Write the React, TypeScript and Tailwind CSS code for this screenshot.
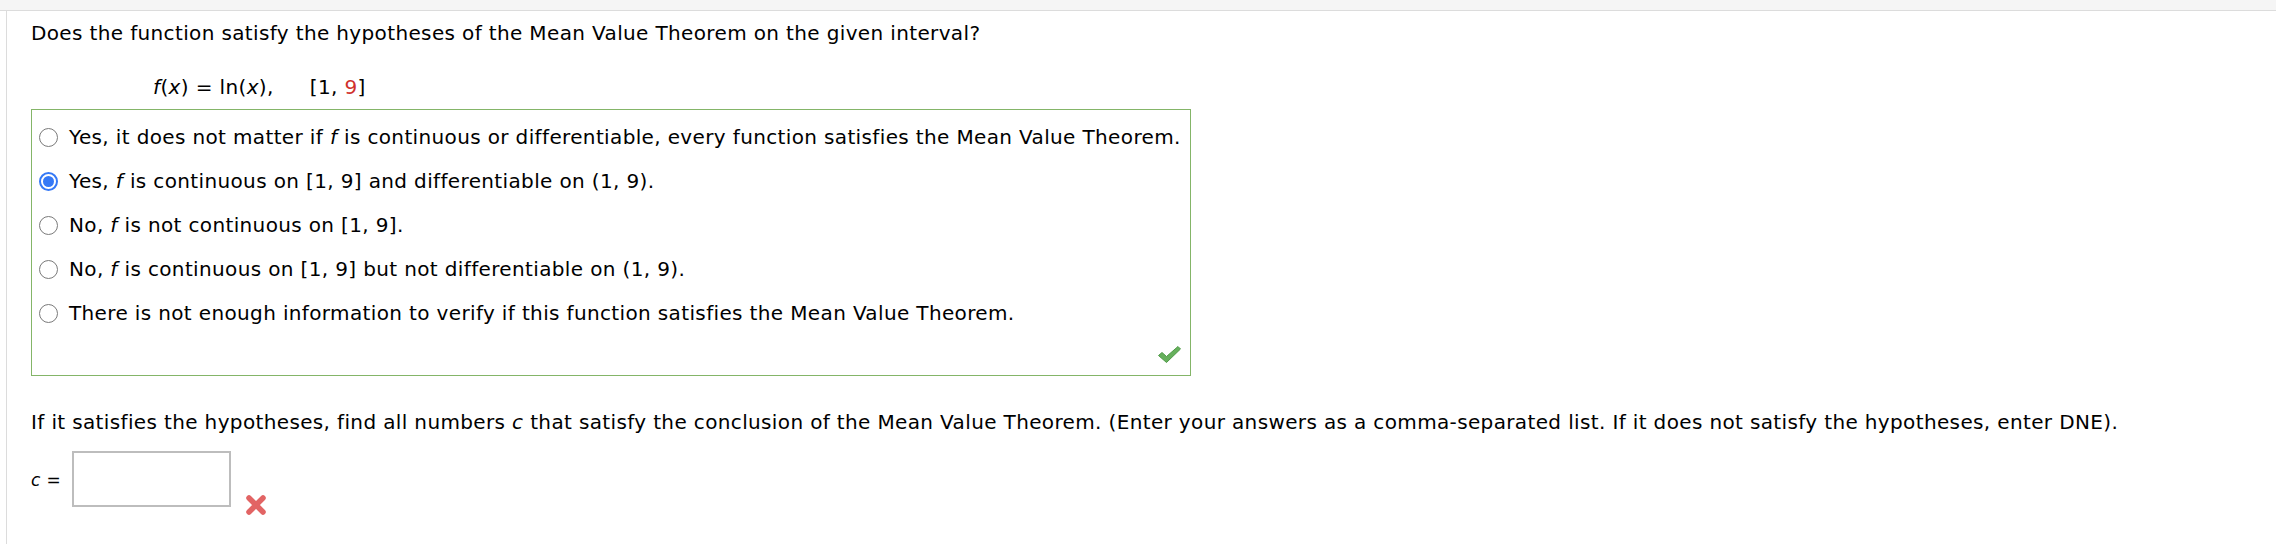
import React from 'react';

const options = [
  { id: 'a', before: 'Yes, it does not matter if ', after: ' is continuous or differentiable, every function satisfies the Mean Value Theorem.' },
  { id: 'b', before: 'Yes, ', after: ' is continuous on [1, 9] and differentiable on (1, 9).' },
  { id: 'c', before: 'No, ', after: ' is not continuous on [1, 9].' },
  { id: 'd', before: 'No, ', after: ' is continuous on [1, 9] but not differentiable on (1, 9).' },
  { id: 'e', before: 'There is not enough information to verify if this function satisfies the Mean Value Theorem.', after: '' },
];

const selected = 'b';

const Radio: React.FC<{ checked: boolean }> = ({ checked }) =>
  checked ? (
    <span className="flex h-[19px] w-[19px] shrink-0 items-center justify-center rounded-full border-[2px] border-[#3478f6] bg-white">
      <span className="h-[11px] w-[11px] rounded-full bg-[#3478f6]" />
    </span>
  ) : (
    <span className="h-[19px] w-[19px] shrink-0 rounded-full border border-[#7a7a7a] bg-white" />
  );

const Check = () => (
  <svg width="25" height="19" viewBox="0 0 25 19">
    <path d="M1.5 10.5 L5 7.5 L9.5 11.5 L21 1.5 L23.5 4 L9.5 17.5 Z" fill="#66b05c" stroke="#4f9a47" strokeWidth="1" strokeLinejoin="round" />
  </svg>
);

const Cross = () => (
  <svg width="22" height="22" viewBox="0 0 22 22">
    <path d="M4 4 L18 18 M18 4 L4 18" stroke="#e26464" strokeWidth="5.5" strokeLinecap="round" />
  </svg>
);

const App: React.FC = () => {
  return (
    <div className="h-[544px] w-full overflow-hidden bg-white text-black" style={{ fontFamily: '"DejaVu Sans", Verdana, sans-serif' }}>
      <div className="h-[11px] border-b border-[#dcdcdc] bg-[#f5f5f5]" />
      <div className="ml-[6px] h-[533px] border-l border-[#dcdcdc] pl-[24px] pt-[10px] tracking-[0.36px]">
        <p className="whitespace-nowrap text-[20px] leading-[24px]">
          Does the function satisfy the hypotheses of the Mean Value Theorem on the given interval?
        </p>
        <p className="mt-[30px] pl-[122px] text-[20px] leading-[24px]">
          <i>f</i>(<i>x</i>) = ln(<i>x</i>),
          <span className="ml-[36px]">
            [1, <span className="text-[#d0312d]">9</span>]
          </span>
        </p>
        <div className="mt-[10px] flex w-[1160px] flex-col border border-[#84b568] pl-[7px] pr-[4px] pt-[5px] pb-[11px]">
          {options.map((o) => (
            <label key={o.id} className="flex h-[44px] items-center gap-[11px] whitespace-nowrap text-[20px] leading-[24px]">
              <Radio checked={o.id === selected} />
              <span>
                {o.before}
                {o.after && <i>f</i>}
                {o.after}
              </span>
            </label>
          ))}
          <div className="mt-[10px] flex justify-end pr-[4px]">
            <Check />
          </div>
        </div>
        <p className="mt-[34px] whitespace-nowrap text-[20px] leading-[24px]">
          If it satisfies the hypotheses, find all numbers <i>c</i> that satisfy the conclusion of the Mean Value Theorem. (Enter your answers as a comma-separated list. If it does not satisfy the hypotheses, enter DNE).
        </p>
        <div className="mt-[17px] flex items-start">
          <span className="mt-[19px] w-[41px] text-[17px] leading-[20px]">
            <i>c</i> =
          </span>
          <div className="h-[56px] w-[159px] border-[2px] border-[#bdbdbd] bg-white" />
          <span className="ml-[14px] mt-[43px]">
            <Cross />
          </span>
        </div>
      </div>
    </div>
  );
};

export default App;
